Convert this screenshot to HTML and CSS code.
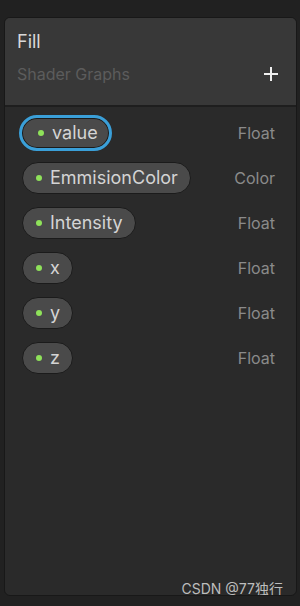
FILE: index.html
```html
<!DOCTYPE html>
<html>
	<head>
		<meta charset="UTF-8">
		<title>Fill</title>
		<link rel="stylesheet" href="styles.css">
	</head>
	<body>
		<div class="blackboard">
			<div class="header">
				<div class="title">Fill</div>
				<div class="sub">
					<span>Shader Graphs</span>
					<svg class="add" width="14" height="14" viewBox="0 0 14 14"><path d="M7 0v14M0 7h14" stroke="#f0f0f0" stroke-width="2"/></svg>
				</div>
			</div>
			<div class="props">
				<div class="row">
					<span class="pill selected"><i></i>value</span>
					<span class="type">Float</span>
				</div>
				<div class="row">
					<span class="pill"><i></i>EmmisionColor</span>
					<span class="type">Color</span>
				</div>
				<div class="row">
					<span class="pill"><i></i>Intensity</span>
					<span class="type">Float</span>
				</div>
				<div class="row">
					<span class="pill"><i></i>x</span>
					<span class="type">Float</span>
				</div>
				<div class="row">
					<span class="pill"><i></i>y</span>
					<span class="type">Float</span>
				</div>
				<div class="row">
					<span class="pill"><i></i>z</span>
					<span class="type">Float</span>
				</div>
			</div>
			<div class="mark">CSDN @77独行</div>
		</div>
	</body>
</html>
```
FILE: styles.css
```css
body {
	margin: 0;
	background: #212121;
	font-family: Inter, "Noto Sans", "Noto Sans CJK SC", sans-serif;
}

.blackboard {
	margin: 17px 0 0 4px;
	width: 291px;
	height: 577px;
	background: #2a2a2a;
	border: 1px solid #181818;
	border-radius: 6px;
	display: flex;
	flex-direction: column;
	overflow: hidden;
}

.header {
	height: 87px;
	background: #383838;
	border-bottom: 2px solid #1e1e1e;
	padding: 0 18px 0 12px;
}

.title {
	margin-top: 13px;
	font-size: 18px;
	color: #d8d8d8;
}

.sub {
	display: flex;
	justify-content: space-between;
	align-items: center;
	margin-top: 12px;
	font-size: 16px;
	color: #5c5c5c;
}

.props {
	padding: 3px 21px 0 14px;
	flex: 1;
}

.row {
	height: 45px;
	display: flex;
	align-items: center;
	justify-content: space-between;
}

.pill {
	display: flex;
	align-items: center;
	height: 32px;
	padding: 0 12px 0 13px;
	box-sizing: border-box;
	background: #4a4a4a;
	border: 1px solid #1b1b1b;
	border-radius: 16px;
	font-size: 18px;
	color: #d4d4d4;
	margin-left: 3px;
}

.pill i {
	width: 6px;
	height: 6px;
	border-radius: 50%;
	background: #8fe25a;
	margin-right: 8px;
}

.pill.selected {
	margin-left: 0;
	height: 36px;
	padding: 0 11px 0 16px;
	border: 3px solid #3a9fd8;
	box-shadow: inset 0 0 0 1px #1b1b1b;
	border-radius: 18px;
}

.type {
	font-size: 16px;
	color: #8a8a8a;
}

.mark {
	text-align: right;
	padding: 0 13px 0 0;
	margin-bottom: -2px;
	line-height: 16px;
	font-size: 14px;
	color: #bdbdbd;
}
```
